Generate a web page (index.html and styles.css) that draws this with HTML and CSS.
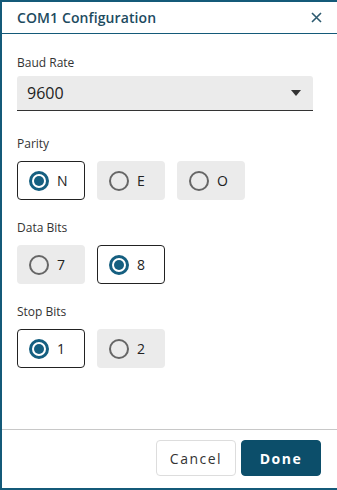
FILE: index.html
```html
<html lang="en">
<head>
    <meta charset="UTF-8">
    <meta name="viewport" content="width=device-width,initial-scale=1">
    <title>COM1 Configuration</title>
    <link rel="stylesheet" href="styles.css">
</head>
<body>
<div class="dialog">
    <header>
        <h1>COM1 Configuration</h1>
        <button class="close" aria-label="Close">
            <svg width="11" height="11" viewBox="0 0 11 11"><path d="M1 1L10 10M10 1L1 10" stroke="#2c5a70" stroke-width="1.6" fill="none"/></svg>
        </button>
    </header>

    <main>
        <!-- Baud rate -->
        <div class="field baud">
            <label for="baud">Baud Rate</label>
            <div class="select">
                <span id="baud">9600</span>
                <svg class="caret" width="10" height="6" viewBox="0 0 10 6"><path d="M0 0H10L5 6Z" fill="#333"/></svg>
            </div>
        </div>

        <!-- Parity -->
        <div class="field">
            <label>Parity</label>
            <div class="choices">
                <div class="choice on"><span class="dot"></span>N</div>
                <div class="choice"><span class="dot"></span>E</div>
                <div class="choice"><span class="dot"></span>O</div>
            </div>
        </div>

        <!-- Data bits -->
        <div class="field">
            <label>Data Bits</label>
            <div class="choices">
                <div class="choice"><span class="dot"></span>7</div>
                <div class="choice on"><span class="dot"></span>8</div>
            </div>
        </div>

        <!-- Stop bits -->
        <div class="field">
            <label>Stop Bits</label>
            <div class="choices">
                <div class="choice on"><span class="dot"></span>1</div>
                <div class="choice"><span class="dot"></span>2</div>
            </div>
        </div>
    </main>

    <footer>
        <button class="btn">Cancel</button>
        <button class="btn primary">Done</button>
    </footer>
</div>
</body>
</html>
```

FILE: styles.css
```css
:root{
    --c-frame:#145a79;
    --c-accent:#155f80;
    --c-primary:#0c4e6a;
    --c-text:#333;
    --c-fill:#ebebeb;
    --radius:4px;
}
*{box-sizing:border-box;margin:0;padding:0;font-family:"Open Sans",sans-serif}
body{background:#fff;color:var(--c-text)}
.dialog{height:490px;border:2px solid var(--c-frame);border-right:0;display:flex;flex-direction:column;background:#fff}
header{height:32px;border-bottom:1px solid var(--c-frame);display:flex;align-items:center;justify-content:space-between;padding:0 14px 0 15px}
header h1{font-size:14px;font-weight:600;color:#1d4b5f;letter-spacing:.1px}
.close{background:none;border:none;width:14px;height:14px;display:flex;align-items:center;justify-content:center;cursor:pointer}
main{flex:1;padding:21px 24px 0 15px;display:flex;flex-direction:column;gap:20px}
.field{display:flex;flex-direction:column;gap:9px}
.field.baud{gap:5px;margin-bottom:5px}
label{font-size:12px;line-height:16px;color:var(--c-text)}
.select{height:35px;background:var(--c-fill);border-bottom:1px solid #333;border-radius:3px 3px 0 0;display:flex;align-items:center;justify-content:space-between;padding:0 12px 0 10px;font-size:16px;color:#222}
.choices{display:flex;gap:12px}
.choice{width:68px;height:39px;background:var(--c-fill);border:1px solid transparent;border-radius:var(--radius);display:flex;align-items:center;padding-left:11px;gap:8px;font-size:14px;color:#222}
.choice.on{background:#fff;border-color:#222}
.dot{width:20px;height:20px;border:2px solid #666;border-radius:50%;position:relative}
.choice.on .dot{border:3px solid var(--c-accent)}
.choice.on .dot::after{content:"";position:absolute;left:2px;top:2px;width:10px;height:10px;border-radius:50%;background:var(--c-accent)}
footer{border-top:1px solid #c8c8c8;display:flex;justify-content:flex-end;gap:5px;padding:10px 16px 12px 0}
.btn{width:80px;height:36px;border:1px solid #ddd;background:#fff;border-radius:var(--radius);font-size:14px;letter-spacing:1.5px;color:#333;cursor:pointer}
.btn.primary{background:var(--c-primary);border-color:var(--c-primary);color:#fff;font-weight:700}
```
